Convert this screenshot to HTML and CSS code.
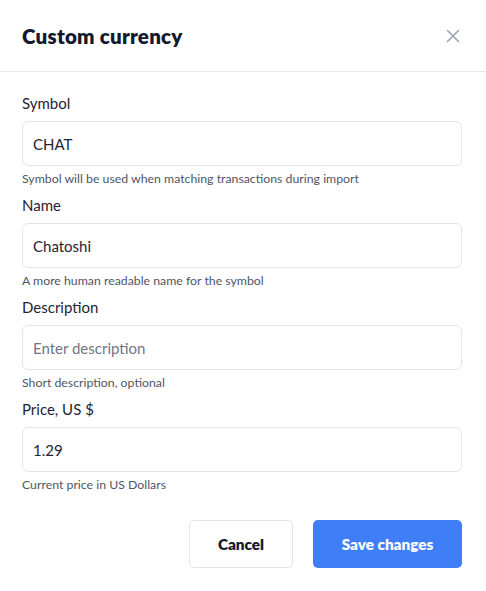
FILE: index.html
```html
<!DOCTYPE html>
<html>
 <head>
  <title>Custom currency</title>
  <link rel="stylesheet" href="styles.css">
 </head>
 <body>
  <div class="modal">
   <!-- Cabecera del modal -->
   <div class="modal-header">
    <h2>Custom currency</h2>
    <button class="close" type="button" aria-label="Close">
     <svg width="14" height="14" viewBox="0 0 14 14"><path d="M1.5 1.5L12.5 12.5M12.5 1.5L1.5 12.5" stroke="#9aa5b8" stroke-width="1.6" stroke-linecap="round"/></svg>
    </button>
   </div>
   <!-- Campos del formulario -->
   <form class="modal-body">
    <div class="field">
     <label>Symbol</label>
     <input type="text" value="CHAT"/>
     <p class="hint">Symbol will be used when matching transactions during import</p>
    </div>
    <div class="field">
     <label>Name</label>
     <input type="text" value="Chatoshi"/>
     <p class="hint">A more human readable name for the symbol</p>
    </div>
    <div class="field">
     <label>Description</label>
     <input type="text" placeholder="Enter description"/>
     <p class="hint">Short description, optional</p>
    </div>
    <div class="field">
     <label>Price, US $</label>
     <input type="text" value="1.29"/>
     <p class="hint">Current price in US Dollars</p>
    </div>
    <div class="actions">
     <button type="button" class="btn btn-cancel">Cancel</button>
     <button type="button" class="btn btn-save">Save changes</button>
    </div>
   </form>
  </div>
 </body>
</html>
```

FILE: styles.css
```css
/* Estilos generales */
body {
 margin: 0;
 font-family: "Lato", "Liberation Sans", sans-serif;
 background-color: #fff;
 color: #1f2433;
}
.modal {
 width: 486px;
 height: 591px;
 background-color: #fff;
}
/* Cabecera */
.modal-header {
 display: flex;
 align-items: center;
 justify-content: space-between;
 padding: 0 24px 0 22px;
 border-bottom: 1px solid #e6e8ef;
 box-sizing: border-box;
 height: 72px;
}
.modal-header h2 {
 margin: 0;
 font-size: 20.6px;
 font-weight: 800;
 color: #141a2e;
 letter-spacing: 0.2px;
}
.close {
 background: none;
 border: none;
 padding: 0;
 width: 14px;
 height: 14px;
 margin-right: 2px;
 cursor: pointer;
}
/* Formulario */
.modal-body {
 padding: 21px 24px 0 22px;
}
.field {
 margin-bottom: 8px;
}
.field label {
 display: block;
 font-size: 15px;
 line-height: 20px;
 color: #1f2433;
 margin-bottom: 8px;
}
.field input {
 display: block;
 width: 100%;
 height: 45px;
 box-sizing: border-box;
 border: 1px solid #e3e5ec;
 border-radius: 6px;
 padding: 0 10px;
 font-family: inherit;
 font-size: 15px;
 color: #1f2433;
 outline: none;
}
.field input::placeholder {
 color: #6f7585;
}
.hint {
 margin: 5px 0 0 0;
 font-size: 12.3px;
 line-height: 16px;
 color: #4f5566;
}
/* Botones */
.actions {
 display: flex;
 justify-content: flex-end;
 gap: 20px;
 margin-top: 27px;
}
.btn {
 height: 48px;
 border-radius: 5px;
 font-family: inherit;
 font-size: 15.3px;
 font-weight: 800;
 cursor: pointer;
}
.btn-cancel {
 width: 104px;
 background-color: #fff;
 color: #141a2e;
 border: 1px solid #e3e5ec;
}
.btn-save {
 width: 149px;
 background-color: #3e7ef7;
 color: #fff;
 border: none;
}
```
